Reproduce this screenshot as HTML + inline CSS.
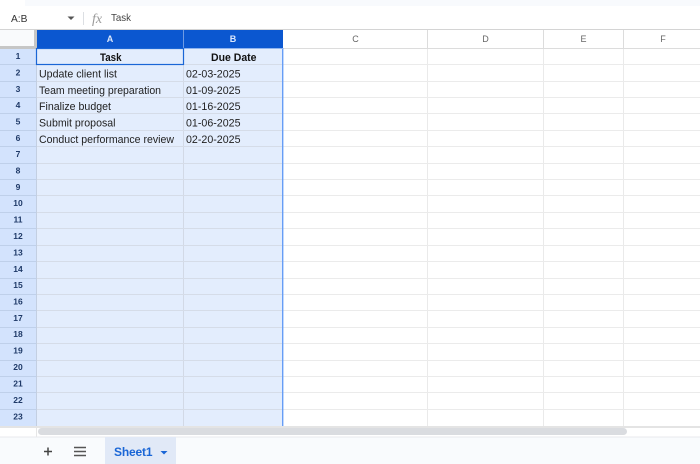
<!DOCTYPE html>
<html><head><meta charset="utf-8"><style>
html,body{margin:0;padding:0;background:#fff;width:700px;height:464px;overflow:hidden}
svg{display:block;position:absolute;left:0;top:0;filter:blur(0.35px)}
text{font-family:"Liberation Sans",sans-serif}
.c{font-size:11px;fill:#1f1f1f}
.h{font-size:9px;font-weight:bold;text-anchor:middle;fill:#444}
.r{font-size:8.5px;font-weight:bold;text-anchor:middle;fill:#1f3a68}
.g{font-size:9px;text-anchor:middle;fill:#666}
</style></head><body>
<svg width="700" height="464" viewBox="0 0 700 464">
<rect width="700" height="464" fill="#fff"/>
<rect y="0" width="700" height="6" fill="#f8fafd"/>
<rect x="0" y="0" width="25" height="6" fill="#fff"/>
<!-- formula bar -->
<text x="11" y="22" font-size="10.2" fill="#333">A:B</text>
<path d="M67.500 16.500h7l-3.500 3.500z" fill="#555"/>
<rect x="83" y="12" width="1" height="13" fill="#dcdfe3"/>
<text x="92" y="23" font-size="14" font-style="italic" style="font-family:'Liberation Serif',serif" fill="#9a9a9a">fx</text>
<text x="111" y="21" font-size="10.500" fill="#444" textLength="20" lengthAdjust="spacingAndGlyphs">Task</text>
<!-- corner -->
<rect x="0" y="29" width="700" height="1" fill="#d4d4d4"/>
<rect x="0" y="30" width="34" height="16" fill="#f9fafc"/>
<rect x="34" y="30" width="3" height="19" fill="#c6c6c6"/>
<rect x="0" y="46" width="37" height="3" fill="#c6c6c6"/>
<!-- selection fill -->
<rect x="37" y="49" width="246" height="377" fill="#e3edfd"/>
<rect x="0" y="49" width="36" height="377" fill="#d3e3fd"/>
<!-- column header -->
<rect x="37" y="30" width="246" height="18" fill="#0b57d0"/>
<rect x="183" y="30" width="1" height="18" fill="#6f9be3"/>
<rect x="283" y="48" width="417" height="1" fill="#dcdcdc"/>
<g fill="#dcdcdc"><rect x="427" y="30" width="1" height="18"/><rect x="543" y="30" width="1" height="18"/><rect x="623" y="30" width="1" height="18"/></g>
<!-- grid -->
<g fill="#eaeaea"><rect x="427" y="49" width="1" height="377"/><rect x="543" y="49" width="1" height="377"/><rect x="623" y="49" width="1" height="377"/></g>
<rect x="183" y="49" width="1" height="377" fill="#d2d9e6"/>
<g id="rows">
<rect x="283" y="64" width="417" height="1" fill="#ebebeb"/><rect x="37" y="64" width="246" height="1" fill="#d5dce8"/><rect y="64" width="36" height="1" fill="#bfd0ea"/>
<rect x="283" y="81" width="417" height="1" fill="#ebebeb"/><rect x="37" y="81" width="246" height="1" fill="#d5dce8"/><rect y="81" width="36" height="1" fill="#bfd0ea"/>
<rect x="283" y="97" width="417" height="1" fill="#ebebeb"/><rect x="37" y="97" width="246" height="1" fill="#d5dce8"/><rect y="97" width="36" height="1" fill="#bfd0ea"/>
<rect x="283" y="113" width="417" height="1" fill="#ebebeb"/><rect x="37" y="113" width="246" height="1" fill="#d5dce8"/><rect y="113" width="36" height="1" fill="#bfd0ea"/>
<rect x="283" y="130" width="417" height="1" fill="#ebebeb"/><rect x="37" y="130" width="246" height="1" fill="#d5dce8"/><rect y="130" width="36" height="1" fill="#bfd0ea"/>
<rect x="283" y="146" width="417" height="1" fill="#ebebeb"/><rect x="37" y="146" width="246" height="1" fill="#d5dce8"/><rect y="146" width="36" height="1" fill="#bfd0ea"/>
<rect x="283" y="163" width="417" height="1" fill="#ebebeb"/><rect x="37" y="163" width="246" height="1" fill="#d5dce8"/><rect y="163" width="36" height="1" fill="#bfd0ea"/>
<rect x="283" y="179" width="417" height="1" fill="#ebebeb"/><rect x="37" y="179" width="246" height="1" fill="#d5dce8"/><rect y="179" width="36" height="1" fill="#bfd0ea"/>
<rect x="283" y="195" width="417" height="1" fill="#ebebeb"/><rect x="37" y="195" width="246" height="1" fill="#d5dce8"/><rect y="195" width="36" height="1" fill="#bfd0ea"/>
<rect x="283" y="212" width="417" height="1" fill="#ebebeb"/><rect x="37" y="212" width="246" height="1" fill="#d5dce8"/><rect y="212" width="36" height="1" fill="#bfd0ea"/>
<rect x="283" y="228" width="417" height="1" fill="#ebebeb"/><rect x="37" y="228" width="246" height="1" fill="#d5dce8"/><rect y="228" width="36" height="1" fill="#bfd0ea"/>
<rect x="283" y="245" width="417" height="1" fill="#ebebeb"/><rect x="37" y="245" width="246" height="1" fill="#d5dce8"/><rect y="245" width="36" height="1" fill="#bfd0ea"/>
<rect x="283" y="261" width="417" height="1" fill="#ebebeb"/><rect x="37" y="261" width="246" height="1" fill="#d5dce8"/><rect y="261" width="36" height="1" fill="#bfd0ea"/>
<rect x="283" y="278" width="417" height="1" fill="#ebebeb"/><rect x="37" y="278" width="246" height="1" fill="#d5dce8"/><rect y="278" width="36" height="1" fill="#bfd0ea"/>
<rect x="283" y="294" width="417" height="1" fill="#ebebeb"/><rect x="37" y="294" width="246" height="1" fill="#d5dce8"/><rect y="294" width="36" height="1" fill="#bfd0ea"/>
<rect x="283" y="310" width="417" height="1" fill="#ebebeb"/><rect x="37" y="310" width="246" height="1" fill="#d5dce8"/><rect y="310" width="36" height="1" fill="#bfd0ea"/>
<rect x="283" y="327" width="417" height="1" fill="#ebebeb"/><rect x="37" y="327" width="246" height="1" fill="#d5dce8"/><rect y="327" width="36" height="1" fill="#bfd0ea"/>
<rect x="283" y="343" width="417" height="1" fill="#ebebeb"/><rect x="37" y="343" width="246" height="1" fill="#d5dce8"/><rect y="343" width="36" height="1" fill="#bfd0ea"/>
<rect x="283" y="360" width="417" height="1" fill="#ebebeb"/><rect x="37" y="360" width="246" height="1" fill="#d5dce8"/><rect y="360" width="36" height="1" fill="#bfd0ea"/>
<rect x="283" y="376" width="417" height="1" fill="#ebebeb"/><rect x="37" y="376" width="246" height="1" fill="#d5dce8"/><rect y="376" width="36" height="1" fill="#bfd0ea"/>
<rect x="283" y="392" width="417" height="1" fill="#ebebeb"/><rect x="37" y="392" width="246" height="1" fill="#d5dce8"/><rect y="392" width="36" height="1" fill="#bfd0ea"/>
<rect x="283" y="409" width="417" height="1" fill="#ebebeb"/><rect x="37" y="409" width="246" height="1" fill="#d5dce8"/><rect y="409" width="36" height="1" fill="#bfd0ea"/>
</g>
<rect x="36" y="49" width="1" height="377" fill="#c3cfe2"/>
<!-- selection border -->
<rect x="282" y="48" width="1.400" height="378" fill="#669df6"/>
<rect x="37" y="48" width="246" height="1" fill="#8fb4ef"/>
<rect x="36.500" y="48.500" width="147" height="16" fill="none" stroke="#1a66d6" stroke-width="1.200"/>
<!-- bottom -->
<rect x="0" y="426" width="700" height="2" fill="#e4e4e4"/>
<rect x="0" y="428" width="700" height="9" fill="#fff"/>
<rect x="36" y="428" width="1" height="9" fill="#e6e6e6"/>
<rect x="38" y="428" width="589" height="7" rx="3.500" fill="#dadce0"/>
<rect x="0" y="437" width="700" height="27" fill="#f9fbfd"/>
<rect x="0" y="436.500" width="700" height="1" fill="#e8eaed"/>
<rect x="105" y="437" width="71" height="27" fill="#e1e9f7"/>
<path d="M48 447.500v8M44 451.500h8" stroke="#444" stroke-width="1.500" fill="none"/>
<path d="M74 447.500h12M74 451.500h12M74 455.500h12" stroke="#555" stroke-width="1.600" fill="none"/>
<text x="114" y="456" font-size="12" font-weight="bold" fill="#1a66d6" textLength="38.500" lengthAdjust="spacing">Sheet1</text>
<path d="M160.500 451h7l-3.500 3.500z" fill="#1a66d6"/>
<!-- column letters -->
<text class="h" x="110" y="42" style="fill:#dbe7fb">A</text>
<text class="h" x="233" y="42" style="fill:#dbe7fb">B</text>
<text class="g" x="355.500" y="42">C</text>
<text class="g" x="485.500" y="42">D</text>
<text class="g" x="583.500" y="42">E</text>
<text class="g" x="663" y="42">F</text>
<!-- data -->
<text x="100" y="61" font-size="11" font-weight="bold" fill="#111" textLength="21.500" lengthAdjust="spacingAndGlyphs">Task</text>
<text x="211" y="61" font-size="11" font-weight="bold" fill="#111" textLength="45.500" lengthAdjust="spacingAndGlyphs">Due Date</text>
<text class="c" x="39" y="77.500" textLength="78" lengthAdjust="spacingAndGlyphs">Update client list</text><text class="c" x="186" y="77.500" textLength="54.500" lengthAdjust="spacingAndGlyphs">02-03-2025</text>
<text class="c" x="39" y="94" textLength="122" lengthAdjust="spacingAndGlyphs">Team meeting preparation</text><text class="c" x="186" y="94" textLength="54.500" lengthAdjust="spacingAndGlyphs">01-09-2025</text>
<text class="c" x="39" y="110" textLength="72" lengthAdjust="spacingAndGlyphs">Finalize budget</text><text class="c" x="186" y="110" textLength="54.500" lengthAdjust="spacingAndGlyphs">01-16-2025</text>
<text class="c" x="39" y="126.500" textLength="76.500" lengthAdjust="spacingAndGlyphs">Submit proposal</text><text class="c" x="186" y="126.500" textLength="54.500" lengthAdjust="spacingAndGlyphs">01-06-2025</text>
<text class="c" x="39" y="143" textLength="135" lengthAdjust="spacingAndGlyphs">Conduct performance review</text><text class="c" x="186" y="143" textLength="54.500" lengthAdjust="spacingAndGlyphs">02-20-2025</text>
<!-- row numbers -->
<g>
<text class="r" x="18" y="59">1</text><text class="r" x="18" y="75.500">2</text><text class="r" x="18" y="92">3</text><text class="r" x="18" y="108">4</text><text class="r" x="18" y="124.500">5</text><text class="r" x="18" y="141">6</text><text class="r" x="18" y="157">7</text><text class="r" x="18" y="173.500">8</text><text class="r" x="18" y="190">9</text><text class="r" x="18" y="206">10</text><text class="r" x="18" y="222.500">11</text><text class="r" x="18" y="239">12</text><text class="r" x="18" y="255.500">13</text><text class="r" x="18" y="272">14</text><text class="r" x="18" y="288">15</text><text class="r" x="18" y="304.500">16</text><text class="r" x="18" y="321">17</text><text class="r" x="18" y="337">18</text><text class="r" x="18" y="353.500">19</text><text class="r" x="18" y="370">20</text><text class="r" x="18" y="386.500">21</text><text class="r" x="18" y="403">22</text><text class="r" x="18" y="419.500">23</text>
</g>
</svg>
</body></html>
